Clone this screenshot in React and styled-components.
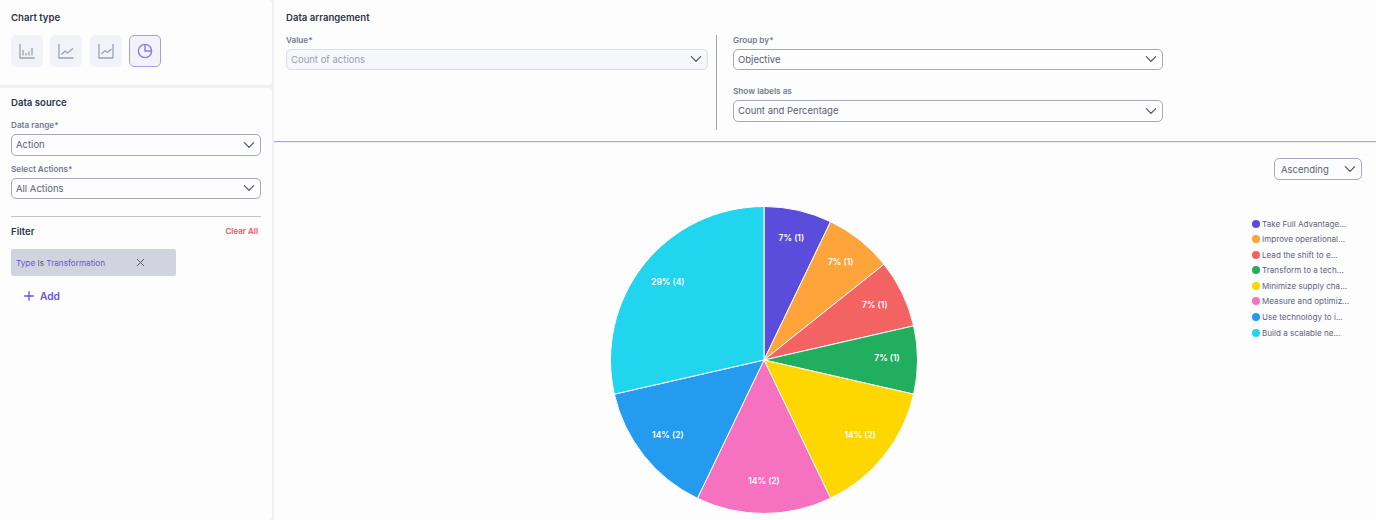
import React from "react";
import styled, { createGlobalStyle } from "styled-components";

const GlobalStyle = createGlobalStyle`
  html, body {
    margin: 0;
    padding: 0;
    background: #eef0f4;
    font-family: Inter, "Liberation Sans", sans-serif;
    overflow: hidden;
  }
`;

const Page = styled.div`
  display: grid;
  grid-template-columns: 272px 1fr;
  column-gap: 2px;
  width: 1376px;
  height: 520px;
  overflow: hidden;
`;

const Sidebar = styled.aside`
  display: flex;
  flex-direction: column;
  gap: 3px;
`;

const Card = styled.section`
  background: #fdfdfe;
  border-radius: 0 4px 4px 0;
  box-sizing: border-box;
  padding: ${(p) => p.$padding || "11px 11px 0"};
  height: ${(p) => p.$height || "auto"};
  flex: ${(p) => (p.$grow ? 1 : "none")};
`;

const Title = styled.h3`
  margin: 0;
  font-size: 9.6px;
  line-height: 12px;
  font-weight: 600;
  color: #2f3447;
`;

const IconRow = styled.div`
  display: flex;
  gap: 7.3px;
  margin-top: 11.5px;
`;

const IconButton = styled.button`
  width: 32px;
  height: 32px;
  padding: 0;
  display: flex;
  align-items: center;
  justify-content: center;
  background: #f2f3f9;
  border: ${(p) => (p.$active ? "1.5px solid #a99bf1" : "1px solid #f2f3f9")};
  border-radius: 5px;
  color: ${(p) => (p.$active ? "#8b78ee" : "#9aa1b4")};
`;

const Field = styled.div`
  margin-top: ${(p) => p.$top || "0"};
  width: ${(p) => p.$width || "auto"};
`;

const Label = styled.div`
  font-size: 8.2px;
  line-height: 10px;
  font-weight: 600;
  color: #747a8c;
  margin-bottom: 4px;
`;

const SelectBox = styled.div`
  height: 21.5px;
  box-sizing: border-box;
  display: flex;
  align-items: center;
  justify-content: space-between;
  padding: 0 3px 0 4px;
  border: 1px solid ${(p) => (p.$disabled ? "#dcdfea" : "#a4a9bd")};
  border-radius: 5px;
  background: ${(p) => (p.$disabled ? "#f6f7fa" : "#fdfdff")};
  color: ${(p) => (p.$disabled ? "#9a9fac" : "#5b6072")};
  font-size: 9.5px;
`;

const Divider = styled.hr`
  margin: 17px 0 0;
  border: 0;
  border-top: 1px solid #bfc2d6;
`;

const FilterHead = styled.div`
  display: flex;
  align-items: center;
  justify-content: space-between;
  margin-top: 9px;
  padding-right: 3px;
`;

const ClearAll = styled.span`
  font-size: 8px;
  font-weight: 600;
  padding-bottom: 2px;
  color: #f2555c;
`;

const FilterChip = styled.div`
  width: 165px;
  height: 27px;
  margin-top: 11px;
  box-sizing: border-box;
  display: flex;
  align-items: center;
  justify-content: space-between;
  padding: 0 31px 0 5px;
  background: #d1d4de;
  border-radius: 2px;
  font-size: 8.2px;
  color: #565b6b;
`;

const ChipAccent = styled.span`
  color: #6a50e8;
`;

const AddButton = styled.div`
  display: flex;
  align-items: center;
  gap: 6px;
  margin: 14px 0 0 13px;
  font-size: 10.2px;
  font-weight: 600;
  color: #6a50e8;
`;

const Main = styled.main`
  display: flex;
  flex-direction: column;
  min-width: 0;
`;

const Arrangement = styled.section`
  height: 142px;
  box-sizing: border-box;
  padding: 11.5px 12px 0;
  background: #fdfdfe;
  border-bottom: 1px solid #a9acbd;
`;

const ArrangementGrid = styled.div`
  display: grid;
  grid-template-columns: 422px 455px;
  margin-top: 11px;
`;

const GroupColumn = styled.div`
  margin-left: 8px;
  padding-left: 16px;
  border-left: 1px solid #9fa3b3;
  height: 95px;
`;

const ChartArea = styled.section`
  flex: 1;
  position: relative;
  background: #fdfdfe;
  margin-top: 1px;
`;

const SortRow = styled.div`
  display: flex;
  justify-content: flex-end;
  padding: 15px 14px 0 0;
`;

const SortBox = styled(SelectBox)`
  width: 88px;
  height: 22px;
  padding-left: 6px;
`;

const PieHolder = styled.div`
  position: absolute;
  left: 335.3px;
  top: 62px;
  line-height: 0;
`;

const PieLabel = styled.text`
  font-family: Inter, "Liberation Sans", sans-serif;
  font-size: 8.5px;
  font-weight: 600;
  fill: #ffffff;
  text-anchor: middle;
  dominant-baseline: middle;
`;

const Legend = styled.ul`
  position: absolute;
  left: 978px;
  top: 75.5px;
  margin: 0;
  padding: 0;
  list-style: none;
  display: flex;
  flex-direction: column;
  gap: 5.6px;
`;

const LegendItem = styled.li`
  display: flex;
  align-items: center;
  gap: 2px;
  height: 10px;
  font-size: 8.1px;
  color: #5f6474;
  white-space: nowrap;
`;

const Dot = styled.span`
  width: 8px;
  height: 8px;
  border-radius: 50%;
  background: ${(p) => p.$color};
`;

const Chevron = () => (
  <svg width="16" height="16" viewBox="0 0 24 24" fill="none" stroke="#4b5064" strokeWidth="1.7" strokeLinecap="round" strokeLinejoin="round">
    <path d="M5 8.5l7 7 7-7" />
  </svg>
);

const BarIcon = () => (
  <svg width="18" height="18" viewBox="0 0 18 18" fill="none" stroke="currentColor" strokeWidth="1.3">
    <path d="M2 2v14h14.5" />
    <path d="M5 8v5.5M8 11v2.5M11 9.5v4M14 6v7.5" />
  </svg>
);

const LineIcon = () => (
  <svg width="18" height="18" viewBox="0 0 18 18" fill="none" stroke="currentColor" strokeWidth="1.3">
    <path d="M2 2v14h14.5" />
    <path d="M4.5 12.5l3.5-3.5 2.5 2 5.5-4.5" />
  </svg>
);

const AreaIcon = () => (
  <svg width="18" height="18" viewBox="0 0 18 18" fill="none" stroke="currentColor" strokeWidth="1.3">
    <path d="M2 2v14h14M16 2v14" />
    <path d="M4.5 12l3.5-3.5 2.5 2 4-3.5" />
  </svg>
);

const PieIcon = () => (
  <svg width="16" height="16" viewBox="0 0 16 16" fill="none" stroke="currentColor" strokeWidth="1.4">
    <circle cx="8" cy="8" r="6.6" />
    <path d="M8 1.4V8h6.6" />
  </svg>
);

const slices = [
  { color: "#5b4ddb", value: 1, label: "7% (1)", name: "Take Full Advantage..." },
  { color: "#ffa33b", value: 1, label: "7% (1)", name: "Improve operational..." },
  { color: "#f46363", value: 1, label: "7% (1)", name: "Lead the shift to e..." },
  { color: "#21ae5e", value: 1, label: "7% (1)", name: "Transform to a tech..." },
  { color: "#ffd600", value: 2, label: "14% (2)", name: "Minimize supply cha..." },
  { color: "#f672c1", value: 2, label: "14% (2)", name: "Measure and optimiz..." },
  { color: "#259bf0", value: 2, label: "14% (2)", name: "Use technology to i..." },
  { color: "#22d5ee", value: 4, label: "29% (4)", name: "Build a scalable ne..." },
];

function PieChart() {
  const r = 153.5;
  const c = 155;
  const total = slices.reduce((sum, s) => sum + s.value, 0);
  let run = 0;
  const point = (a, d) => [c + d * Math.sin(a), c - d * Math.cos(a)];

  return (
    <svg width="310" height="310" viewBox="0 0 310 310">
      {slices.map((s) => {
        const start = (run / total) * Math.PI * 2;
        run += s.value;
        const end = (run / total) * Math.PI * 2;
        const [x1, y1] = point(start, r);
        const [x2, y2] = point(end, r);
        const large = end - start > Math.PI ? 1 : 0;
        return (
          <path
            key={s.name}
            d={`M${c} ${c}L${x1} ${y1}A${r} ${r} 0 ${large} 1 ${x2} ${y2}Z`}
            fill={s.color}
            stroke="#fff"
            strokeWidth="1"
          />
        );
      })}
      {(() => {
        let acc = 0;
        return slices.map((s) => {
          const mid = ((acc + s.value / 2) / total) * Math.PI * 2;
          acc += s.value;
          const [x, y] = point(mid, 123);
          return (
            <PieLabel key={s.name} x={x} y={y - 1}>
              {s.label}
            </PieLabel>
          );
        });
      })()}
    </svg>
  );
}

export default function App() {
  return (
    <Page>
      <GlobalStyle />
      <Sidebar>
        <Card $height="85px" $padding="11.5px 11px 0">
          <Title>Chart type</Title>
          <IconRow>
            <IconButton><BarIcon /></IconButton>
            <IconButton><LineIcon /></IconButton>
            <IconButton><AreaIcon /></IconButton>
            <IconButton $active><PieIcon /></IconButton>
          </IconRow>
        </Card>
        <Card $grow $padding="9px 11px 0">
          <Title>Data source</Title>
          <Field $top="11px">
            <Label>Data range*</Label>
            <SelectBox>Action<Chevron /></SelectBox>
          </Field>
          <Field $top="8px">
            <Label>Select Actions*</Label>
            <SelectBox>All Actions<Chevron /></SelectBox>
          </Field>
          <Divider />
          <FilterHead>
            <Title>Filter</Title>
            <ClearAll>Clear All</ClearAll>
          </FilterHead>
          <FilterChip>
            <span>
              <ChipAccent>Type</ChipAccent> Is <ChipAccent>Transformation</ChipAccent>
            </span>
            <svg width="9" height="9" viewBox="0 0 9 9" stroke="#565b6b" strokeWidth="1">
              <path d="M1 1l7 7M8 1l-7 7" />
            </svg>
          </FilterChip>
          <AddButton>
            <svg width="10" height="10" viewBox="0 0 10 10" stroke="#6a50e8" strokeWidth="1.3">
              <path d="M5 0.2v9.6M0.2 5h9.6" />
            </svg>
            Add
          </AddButton>
        </Card>
      </Sidebar>
      <Main>
        <Arrangement>
          <Title>Data arrangement</Title>
          <ArrangementGrid>
            <Field>
              <Label>Value*</Label>
              <SelectBox $disabled>Count of actions<Chevron /></SelectBox>
            </Field>
            <GroupColumn>
              <Label>Group by*</Label>
              <SelectBox>Objective<Chevron /></SelectBox>
              <Field $top="16px">
                <Label>Show labels as</Label>
                <SelectBox>Count and Percentage<Chevron /></SelectBox>
              </Field>
            </GroupColumn>
          </ArrangementGrid>
        </Arrangement>
        <ChartArea>
          <SortRow>
            <SortBox>Ascending<Chevron /></SortBox>
          </SortRow>
          <PieHolder><PieChart /></PieHolder>
          <Legend>
            {slices.map((s) => (
              <LegendItem key={s.name}>
                <Dot $color={s.color} />
                {s.name}
              </LegendItem>
            ))}
          </Legend>
        </ChartArea>
      </Main>
    </Page>
  );
}
